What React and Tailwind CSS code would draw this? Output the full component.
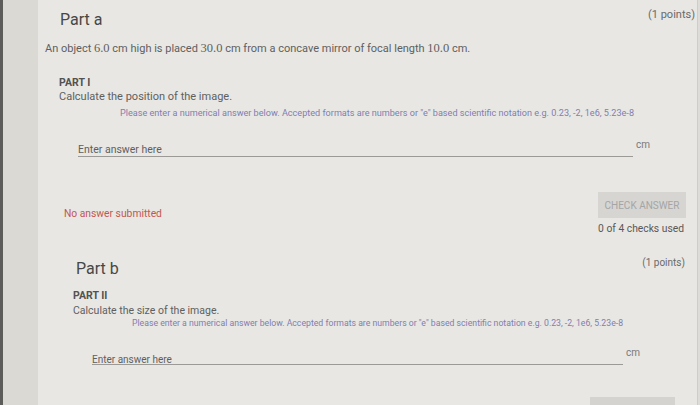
import React from 'react';

const hint =
  'Please enter a numerical answer below. Accepted formats are numbers or "e" based scientific notation e.g. 0.23, -2, 1e6, 5.23e-8';

function Num({ children }) {
  return <span className="font-['Liberation_Serif',serif] text-[12.5px]">{children}</span>;
}

function AnswerRow({ className, width, pad, size }) {
  return (
    <div className={`flex items-start ${className}`}>
      <div
        className={`h-[18px] border-b border-[#9b9a97] leading-[14px] text-[#5f5f5f] ${pad} ${size}`}
        style={{ width }}
      >
        Enter answer here
      </div>
      <span className="ml-[3px] text-[10px] leading-[12px] text-[#7a7a7a]">cm</span>
    </div>
  );
}

export default function App() {
  return (
    <div className="flex h-[405px] w-[700px] overflow-hidden bg-[#dcdad5] font-['Roboto','Liberation_Sans',sans-serif] text-[#5f5f5f]">
      <div className="w-[3px] bg-[#5c5c5a]" />
      <div className="w-[35px] bg-[#dbd9d4]" />
      <div className="flex w-[659px] flex-col bg-[#e8e7e3]">
        {/* Part a */}
        <div className="flex items-start justify-between">
          <h2 className="ml-[22px] mt-[9px] text-[16px] leading-[22px] text-[#474747]">Part a</h2>
          <span className="mr-[2px] mt-[7px] text-[11px] leading-[16px] text-[#6a6a6a]">(1 points)</span>
        </div>
        <p className="ml-[7px] mt-[9px] text-[11px] leading-[16px]">
          An object <Num>6.0</Num> cm high is placed <Num>30.0</Num> cm from a concave mirror of focal length{' '}
          <Num>10.0</Num> cm.
        </p>
        <p className="ml-[21px] mt-[19px] text-[10.5px] font-bold leading-[14px] text-[#525252]">PART I</p>
        <p className="ml-[21px] text-[11px] leading-[14px]">Calculate the position of the image.</p>
        <p className="ml-[82px] mt-[3px] text-[9.1px] leading-[12px] text-[#7f7eb2]">{hint}</p>
        <AnswerRow className="ml-[40px] mt-[20px]" width={555} pad="pt-[4px]" size="text-[10.5px]" />

        <div className="mt-[35px] flex items-start justify-between">
          <span className="ml-[26px] mt-[15px] text-[10.3px] leading-[14px] text-[#c25752]">No answer submitted</span>
          <div className="mr-[11px] flex flex-col items-end">
            <button className="h-[26px] w-[88px] bg-[#d6d5d2] text-[10px] text-[#a5a5a5]">CHECK ANSWER</button>
            <span className="mr-[2px] mt-[4px] text-[10.3px] leading-[14px] text-[#585858]">0 of 4 checks used</span>
          </div>
        </div>

        {/* Part b */}
        <div className="mt-[20px] flex items-start justify-between">
          <h2 className="ml-[38px] mt-[3px] text-[16px] leading-[20px] text-[#474747]">Part b</h2>
          <span className="mr-[12px] text-[10px] leading-[14px] text-[#6a6a6a]">(1 points)</span>
        </div>
        <p className="ml-[35px] mt-[10px] text-[10.5px] font-bold leading-[14px] text-[#525252]">PART II</p>
        <p className="ml-[35px] mt-[1px] text-[10.5px] leading-[13px]">Calculate the size of the image.</p>
        <p className="ml-[94px] text-[8.7px] leading-[12px] text-[#7f7eb2]">{hint}</p>
        <AnswerRow className="ml-[54px] mt-[18px]" width={531} pad="pt-[6px]" size="text-[10px]" />

        <div className="mt-[32px] flex justify-end">
          <div className="mr-[22px] h-[26px] w-[85px] bg-[#d4d3d0]" />
        </div>
      </div>
      <div className="w-px bg-[#cfcdc8]" />
      <div className="flex-1 bg-[#dedcd8]" />
    </div>
  );
}
